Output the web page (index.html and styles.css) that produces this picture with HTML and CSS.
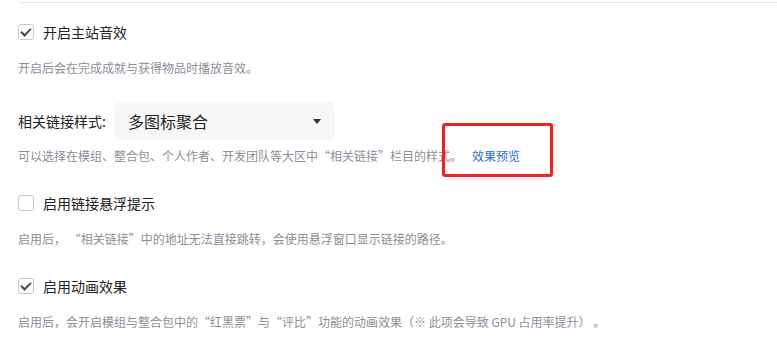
FILE: index.html
```html
<!DOCTYPE html>
<html lang="zh-CN">
<head>
    <meta charset="UTF-8">
    <meta name="viewport" content="width=device-width, initial-scale=1.0">
    <title>设置</title>
    <link rel="stylesheet" href="styles.css">
</head>
<body>
    <div class="settings">
        <div class="setting">
            <label class="option">
                <span class="checkbox checked"></span>
                <span class="option-text">开启主站音效</span>
            </label>
            <div class="desc">开启后会在完成成就与获得物品时播放音效。</div>
        </div>

        <div class="setting select-setting">
            <div class="option">
                <span class="option-text">相关链接样式:</span>
                <div class="select">
                    <span>多图标聚合</span>
                    <span class="caret"></span>
                </div>
            </div>
            <div class="desc">可以选择在模组、整合包、个人作者、开发团队等大区中“相关链接”栏目的样式。<a class="link" href="#">效果预览</a></div>
        </div>

        <div class="setting">
            <label class="option">
                <span class="checkbox"></span>
                <span class="option-text">启用链接悬浮提示</span>
            </label>
            <div class="desc">启用后， “相关链接”中的地址无法直接跳转，会使用悬浮窗口显示链接的路径。</div>
        </div>

        <div class="setting">
            <label class="option">
                <span class="checkbox checked"></span>
                <span class="option-text">启用动画效果</span>
            </label>
            <div class="desc">启用后，会开启模组与整合包中的“红黑票”与“评比”功能的动画效果（※ 此项会导致 GPU 占用率提升） 。</div>
        </div>
    </div>

    <!-- annotation box around the preview link -->
    <div class="highlight"></div>
</body>
</html>
```

FILE: styles.css
```css
body {
    margin: 0;
    font-family: "Noto Sans CJK SC", "Noto Sans", sans-serif;
    color: #222;
    background: #fff;
}
.settings {
    margin: 2px 0 0 18px;
    padding-top: 10px;
    border-top: 1px solid #e6e6e6;
}
.setting {
    margin-bottom: 19px;
}
.select-setting {
    margin-top: 25px;
}
.option {
    display: flex;
    align-items: center;
    height: 38px;
    font-size: 14px;
}
.option-text {
    line-height: 20px;
}
.checkbox {
    width: 14px;
    height: 14px;
    border: 1px solid #c8c8c8;
    border-radius: 3px;
    margin-right: 9px;
    position: relative;
    background: #fff;
}
.checkbox.checked::after {
    content: "";
    position: absolute;
    left: 4px;
    top: 1px;
    width: 4px;
    height: 8px;
    border: solid #4a4a4a;
    border-width: 0 2.5px 2.5px 0;
    transform: rotate(45deg);
}
.select {
    display: flex;
    align-items: center;
    justify-content: space-between;
    width: 220px;
    height: 38px;
    box-sizing: border-box;
    margin-left: 9px;
    padding: 0 13px;
    background-color: #f6f7f9;
    border-radius: 5px;
    font-size: 16px;
    color: #222;
}
.caret {
    width: 0;
    height: 0;
    border-left: 4px solid transparent;
    border-right: 4px solid transparent;
    border-top: 5px solid #333;
    margin-right: 1px;
}
.desc {
    margin-top: 8px;
    font-size: 12px;
    line-height: 18px;
    color: #8a8f99;
}
.select-setting .desc {
    margin-top: 7px;
}
.link {
    margin-left: 10px;
    color: #1f6fd6;
    text-decoration: none;
}
.highlight {
    position: absolute;
    left: 442px;
    top: 123px;
    width: 105px;
    height: 48px;
    border: 3px solid #f5201b;
    border-radius: 3px;
}
```
